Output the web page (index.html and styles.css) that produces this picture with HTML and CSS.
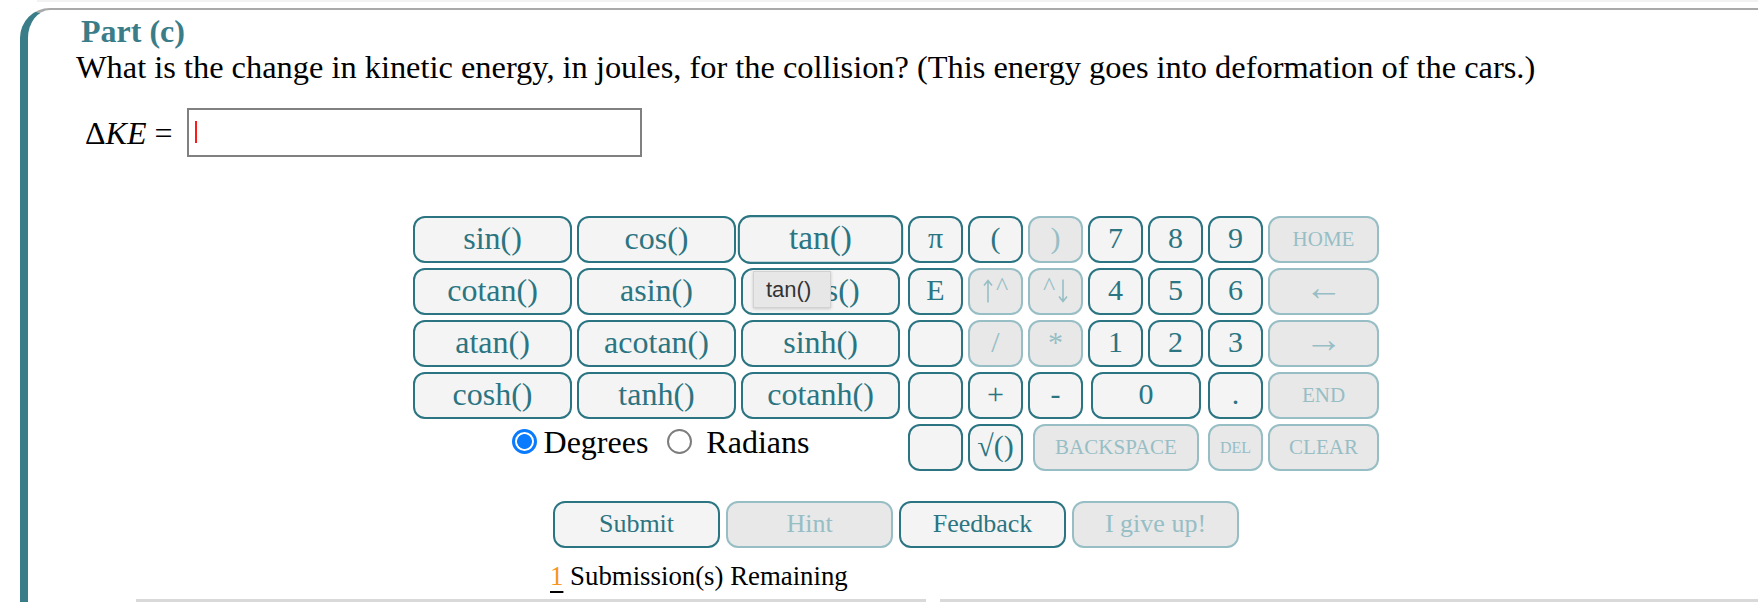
FILE: index.html
```html
<!DOCTYPE html>
<html lang="en">
<head>
<meta charset="utf-8">
<title>Part (c)</title>
<link rel="stylesheet" href="styles.css">
</head>
<body>
<div class="topstrip"></div>
<section class="part">
  <h3 class="part-title">Part (c)</h3>
  <p class="question">What is the change in kinetic energy, in joules, for the collision? (This energy goes into deformation of the cars.)</p>
  <div class="answer-row">
    <span class="label">&Delta;<i>KE</i> =</span>
    <div class="input"><span class="caret"></span></div>
  </div>

  <div class="calc">
    <div class="funcs">
      <button class="btn">sin()</button>
      <button class="btn">cos()</button>
      <button class="btn hover">tan()</button>
      <button class="btn">cotan()</button>
      <button class="btn">asin()</button>
      <button class="btn">acos()</button>
      <button class="btn">atan()</button>
      <button class="btn">acotan()</button>
      <button class="btn">sinh()</button>
      <button class="btn">cosh()</button>
      <button class="btn">tanh()</button>
      <button class="btn">cotanh()</button>
      <div class="angle">
        <label class="opt"><span class="radio checked"></span><span class="opt-text">Degrees</span></label>
        <label class="opt"><span class="radio"></span><span class="opt-text">Radians</span></label>
      </div>
      <div class="tooltip">tan()</div>
    </div>
    <div class="keys">
      <button class="btn key">&pi;</button>
      <button class="btn key">(</button>
      <button class="btn key off">)</button>
      <button class="btn key">7</button>
      <button class="btn key">8</button>
      <button class="btn key">9</button>
      <button class="btn key off word">HOME</button>

      <button class="btn key">E</button>
      <button class="btn key off arrows" aria-label="up power"><svg class="ar" viewBox="0 0 10 24" width="10" height="24"><path d="M5 1.5V23.5M1 6.5L5 1.5L9 6.5" fill="none" stroke="currentColor" stroke-width="1.6"/></svg><span class="hat">^</span></button>
      <button class="btn key off arrows" aria-label="power down"><span class="hat">^</span><svg class="ar" viewBox="0 0 10 24" width="10" height="24"><path d="M5 0.5V22.5M1 17.5L5 22.5L9 17.5" fill="none" stroke="currentColor" stroke-width="1.6"/></svg></button>
      <button class="btn key">4</button>
      <button class="btn key">5</button>
      <button class="btn key">6</button>
      <button class="btn key off arrow">&larr;</button>

      <button class="btn key"></button>
      <button class="btn key off">/</button>
      <button class="btn key off">*</button>
      <button class="btn key">1</button>
      <button class="btn key">2</button>
      <button class="btn key">3</button>
      <button class="btn key off arrow">&rarr;</button>

      <button class="btn key"></button>
      <button class="btn key">+</button>
      <button class="btn key">-</button>
      <button class="btn key zero">0</button>
      <button class="btn key">.</button>
      <button class="btn key off word">END</button>

      <button class="btn key"></button>
      <button class="btn key">&radic;()</button>
      <button class="btn key off word backspace">BACKSPACE</button>
      <button class="btn key off word small">DEL</button>
      <button class="btn key off word">CLEAR</button>
    </div>
  </div>

  <div class="actions">
    <div class="action-buttons">
      <button class="btn act">Submit</button>
      <button class="btn act off">Hint</button>
      <button class="btn act">Feedback</button>
      <button class="btn act off">I give up!</button>
    </div>
    <div class="remaining"><span class="count">1</span> Submission(s) Remaining</div>
  </div>

  <div class="bottom-bars"><div class="bar bar-a"></div><div class="bar bar-b"></div></div>
</section>
</body>
</html>
```
FILE: styles.css
```css
html, body {
  margin: 0;
  padding: 0;
  background: #ffffff;
  overflow: hidden;
}

body {
  font-family: "Liberation Serif", "Times New Roman", serif;
  color: #000;
}

.topstrip {
  height: 2px;
  margin-left: 37px;
  margin-bottom: 6px;
  background: #f2f2f2;
}

.part {
  margin-left: 20px;
  border-top: 2px solid #a9a9a9;
  border-left: 8px solid #3a7c87;
  border-top-left-radius: 30px;
  padding: 3px 42px 0 48px;
}

.part-title {
  margin: 0 0 0 5px;
  font-size: 32px;
  line-height: 36px;
  font-weight: bold;
  color: #3a7d88;
}

.question {
  margin: 0;
  font-size: 32.4px;
  line-height: 36px;
}

.answer-row {
  display: flex;
  align-items: center;
  margin-top: 23px;
}

.label {
  margin-left: 9px;
  font-size: 32px;
  line-height: 36px;
  width: 102px;
}

.input {
  width: 455px;
  height: 49px;
  box-sizing: border-box;
  border: 2px solid #808080;
  padding: 11px 0 0 6px;
  background: #fff;
}

.caret {
  display: block;
  width: 2px;
  height: 22px;
  background: #ff1a1a;
}

/* calculator */
.calc {
  display: flex;
  justify-content: center;
  gap: 8px;
  margin-top: 59px;
}

.funcs {
  position: relative;
  display: grid;
  grid-template-columns: repeat(3, 159px);
  grid-auto-rows: 47px;
  gap: 5px;
}

.keys {
  display: grid;
  grid-template-columns: repeat(6, 55px) 111px;
  grid-auto-rows: 47px;
  gap: 5px;
}

.btn {
  display: flex;
  align-items: center;
  justify-content: center;
  box-sizing: border-box;
  margin: 0;
  padding: 0 0 3px;
  border: 2px solid #2b7482;
  border-radius: 12px;
  background: #f4f4f4;
  color: #2b7482;
  font-family: "Liberation Serif", "Times New Roman", serif;
  font-size: 32px;
  line-height: 1;
}

.btn.hover {
  transform: scale(1.04);
}

.key {
  font-size: 30px;
}

.off {
  border-color: #97bec5;
  background: #e8e8e8;
  color: #97bec5;
}

.word {
  font-size: 21px;
  padding: 0;
}

.small {
  font-size: 16px;
}

.arrow {
  font-size: 38px;
  padding: 0 0 10px;
}

.arrows {
  padding: 0 0 2px;
  gap: 3px;
}

.arrows .ar {
  display: block;
  flex: none;
}

.arrows .hat {
  font-size: 26px;
  line-height: 1;
  margin-top: -8px;
}

.zero {
  grid-column: span 2;
  margin: 0 2px 0 3px;
}

.backspace {
  grid-column: span 3;
  margin: 0 4px 0 5px;
}

.angle {
  grid-column: 1 / 4;
  display: flex;
  justify-content: center;
  align-items: flex-start;
  padding-left: 8px;
  font-size: 32px;
  line-height: 36px;
}

.opt {
  display: flex;
  align-items: flex-start;
}

.opt + .opt {
  margin-left: 19px;
}

.radio {
  width: 25px;
  height: 25px;
  margin-top: 5px;
  box-sizing: border-box;
  border-radius: 50%;
  border: 2px solid #7d7d7d;
  background: #fff;
}

.radio.checked {
  border: 3px solid #0a7bff;
  background: radial-gradient(circle, #0a7bff 0 7px, #ffffff 7.8px);
}

.opt-text {
  margin-left: 7px;
}

.opt + .opt .opt-text {
  margin-left: 14px;
}

.tooltip {
  position: absolute;
  left: 340px;
  top: 55px;
  width: 78px;
  height: 37px;
  box-sizing: border-box;
  padding: 0 0 0 12px;
  border: 1px solid #d2d2d2;
  background: #e7e7e7;
  box-shadow: 0 1px 3px rgba(0, 0, 0, 0.18);
  font-family: "Liberation Sans", Arial, sans-serif;
  font-size: 22px;
  line-height: 35px;
  color: #333;
}

/* actions */
.actions {
  display: flex;
  flex-direction: column;
  align-items: flex-start;
  width: 692px;
  margin: 30px auto 0;
}

.action-buttons {
  display: flex;
}

.act {
  width: 167px;
  height: 47px;
  margin: 0 3px;
  font-size: 26px;
  padding: 0 0 2px;
}

.remaining {
  margin-top: 13px;
  font-size: 26.8px;
  line-height: 30px;
}

.count {
  color: #f7941d;
  text-decoration: underline;
  text-decoration-color: #000;
  text-decoration-thickness: 2px;
  text-underline-offset: 6px;
}

.bottom-bars {
  display: flex;
  margin: 8px -42px 0 60px;
}

.bar {
  height: 4px;
  background: #d9d9d9;
}

.bar-a {
  width: 790px;
}

.bar-b {
  flex: 1;
  margin-left: 14px;
}
```
